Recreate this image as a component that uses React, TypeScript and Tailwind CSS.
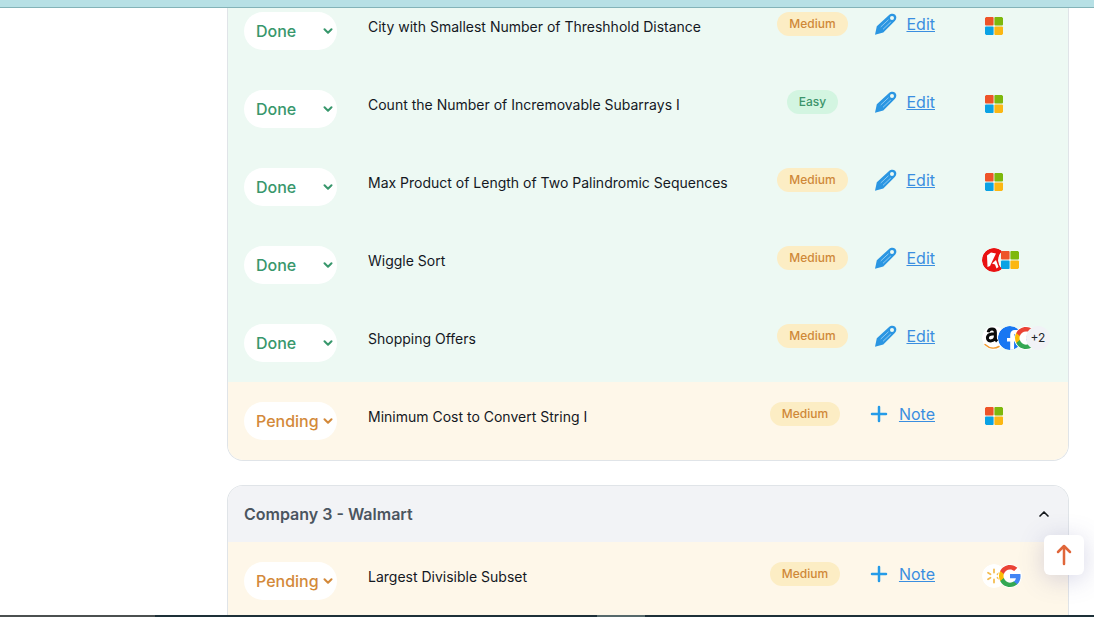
import type { ReactNode } from 'react';
import { ChevronDown, ChevronUp, Plus } from 'lucide-react';

type Status = 'Done' | 'Pending';
type Level = 'Easy' | 'Medium';
type Company = 'microsoft' | 'zomato' | 'amazon' | 'facebook' | 'google' | 'walmart';

interface Problem {
  title: string;
  status: Status;
  level: Level;
  companies: Company[];
  more?: number;
}

const companyTwo: Problem[] = [
  { title: 'City with Smallest Number of Threshhold Distance', status: 'Done', level: 'Medium', companies: ['microsoft'] },
  { title: 'Count the Number of Incremovable Subarrays I', status: 'Done', level: 'Easy', companies: ['microsoft'] },
  { title: 'Max Product of Length of Two Palindromic Sequences', status: 'Done', level: 'Medium', companies: ['microsoft'] },
  { title: 'Wiggle Sort', status: 'Done', level: 'Medium', companies: ['zomato', 'microsoft'] },
  { title: 'Shopping Offers', status: 'Done', level: 'Medium', companies: ['amazon', 'facebook', 'google'], more: 2 },
  { title: 'Minimum Cost to Convert String I', status: 'Pending', level: 'Medium', companies: ['microsoft'] },
];

const companyThree: Problem[] = [
  { title: 'Largest Divisible Subset', status: 'Pending', level: 'Medium', companies: ['walmart', 'google'] },
];

const logos: Record<Company, ReactNode> = {
  microsoft: (
    <>
      {/* currentColor is the row background, so it cuts into the logo beneath */}
      <circle cx="12" cy="12" r="12" fill="currentColor" />
      <rect x="3" y="3" width="8.6" height="8.6" rx="1" fill="#ee5428" />
      <rect x="12.4" y="3" width="8.6" height="8.6" rx="1" fill="#7db80c" />
      <rect x="3" y="12.4" width="8.6" height="8.6" rx="1" fill="#0ba2e4" />
      <rect x="12.4" y="12.4" width="8.6" height="8.6" rx="1" fill="#fbb713" />
    </>
  ),
  zomato: (
    <>
      <circle cx="12" cy="12" r="12" fill="#e91212" />
      <path d="M5 7.5 9 4.5l5 1L8 18l-2.500 1z" fill="#fff" />
      <path d="m10 15.500 4-3.500 2.500 7-2 1.500-1.500-4z" fill="#fff" />
    </>
  ),
  amazon: (
    <>
      <circle cx="12" cy="12" r="12" fill="#fff" />
      <path d="M6.200 6.200C7 1.800 13.400 1.900 13.400 6.400v5.800c0 1.500.7 2.200 1.700 3.200M13.400 7.700c-5-.1-8 1.100-8 4.300 0 4.500 8 3.700 8-2.300" fill="none" stroke="#0b0b0b" strokeWidth="3" />
      <path d="M3 18.500c4.500 4.200 10 4.400 14 2" fill="none" stroke="#f29a2e" strokeWidth="1.500" strokeLinecap="round" />
    </>
  ),
  facebook: (
    <>
      <circle cx="12" cy="12" r="12" fill="#1877f2" />
      <path d="M12.200 24v-8.500H9v-3.600h3.200V9c0-3.200 1.900-4.900 4.700-4.900 1.400 0 2.800.2 2.800.2v3.100h-1.600c-1.500 0-2 1-2 1.900v2.600h3.500l-.6 3.600h-2.900V24z" fill="#fff" />
    </>
  ),
  google: (
    <>
      <circle cx="12" cy="12" r="12" fill="#fff" />
      <path fill="#4285f4" d="M22.560 12.250c0-.78-.07-1.530-.2-2.250H12v4.260h5.920c-.26 1.370-1.040 2.530-2.210 3.310v2.770h3.570c2.080-1.920 3.280-4.740 3.280-8.090z" />
      <path fill="#34a853" d="M12 23c2.970 0 5.460-.98 7.280-2.660l-3.570-2.770c-.98.66-2.230 1.060-3.710 1.060-2.860 0-5.290-1.930-6.160-4.530H2.180v2.840C3.990 20.530 7.700 23 12 23z" />
      <path fill="#fbbc05" d="M5.840 14.090c-.22-.66-.35-1.360-.35-2.090s.13-1.430.35-2.090V7.070H2.180C1.430 8.550 1 10.220 1 12s.43 3.450 1.180 4.930l3.660-2.840z" />
      <path fill="#ea4335" d="M12 5.380c1.620 0 3.060.56 4.210 1.640l3.150-3.150C17.450 2.090 14.970 1 12 1 7.700 1 3.990 3.470 2.180 7.070l3.660 2.840c.87-2.600 3.300-4.530 6.160-4.530z" />
    </>
  ),
  walmart: (
    <>
      <circle cx="12" cy="12" r="12" fill="#fff" />
      <g stroke="#f4bd52" strokeWidth="1.800" strokeLinecap="round">
        <path d="M12 5.500v3M12 15.500v3M6 8.700l2.500 1.500M18 8.700l-2.500 1.500M6 15.300l2.500-1.500M18 15.300l-2.500-1.500" />
      </g>
    </>
  ),
};

function CompanyLogo({ company }: { company: Company }) {
  return (
    <svg viewBox="0 0 24 24" className="w-6 h-6 rounded-full shrink-0" role="img" aria-label={company}>
      {logos[company]}
    </svg>
  );
}

function PencilIcon() {
  return (
    <svg viewBox="0 0 24 24" className="w-6 h-6" aria-hidden="true">
      <path d="M1 22.700 2.800 14.200 14.800 3.200c2-1.800 4.700-2 6.400-.4s1.500 4.400-.4 6.300L9.300 20.600z" fill="#2b96e2" />
      <circle cx="18" cy="6" r="2" fill="#edf9f2" />
      <path d="m6.700 15 7.800-7.300M9 17.300l7.800-7.300" stroke="#8ccaf3" strokeWidth="1" />
    </svg>
  );
}

function StatusSelect({ problem }: { problem: Problem }) {
  const color = problem.status === 'Done' ? 'text-[#38976c]' : 'text-[#d3893a]';
  return (
    <div className={`relative w-[93px] ${color}`}>
      <select
        defaultValue={problem.status}
        aria-label={`Status of ${problem.title}`}
        className="appearance-none w-full h-[38px] pl-3 rounded-full bg-white text-base font-medium outline-none cursor-pointer"
      >
        <option>Done</option>
        <option>Pending</option>
      </select>
      <ChevronDown className="absolute right-0.5 top-3 w-3.5 h-3.5 pointer-events-none" strokeWidth={3.5} />
    </div>
  );
}

function ProblemRow({ problem }: { problem: Problem }) {
  const done = problem.status === 'Done';
  return (
    <tr className={`h-[78px] align-top ${done ? 'bg-[#edf9f3]' : 'bg-[#fef7e9]'}`}>
      <td className="w-[140px] pl-4 pt-5">
        <StatusSelect problem={problem} />
      </td>
      <td className="pt-5 text-sm leading-[30px] text-[#14181f]">{problem.title}</td>
      <td className="w-[200px] pt-5">
        <div className="flex justify-end pr-px">
          <div className="w-[100px] mr-3 flex justify-center">
            <span
              className={`h-6 px-3 rounded-full text-xs leading-6 font-medium ${
                problem.level === 'Easy' ? 'bg-[#d3f5e1] text-[#3c946b]' : 'bg-[#fcedc4] text-[#cf8838]'
              }`}
            >
              {problem.level}
            </span>
          </div>
          <a href="#" className="flex gap-2 text-base leading-6 text-[#3a8ee0]">
            {done ? <PencilIcon /> : <Plus className="w-6 h-6 text-[#259be8]" strokeWidth={2.5} />}
            <span className="underline">{done ? 'Edit' : 'Note'}</span>
          </a>
        </div>
      </td>
      <td className="w-[132px] pl-[46px] pt-5">
        <div className={`flex items-center h-7 -space-x-2 ${done ? 'text-[#edf9f3]' : 'text-[#fef7e9]'}`}>
          {problem.companies.map((company) => (
            <CompanyLogo key={company} company={company} />
          ))}
          {problem.more && (
            <span className="-ml-1 w-6 h-6 rounded-full bg-[#f1f2f6] text-xs leading-6 text-center text-[#22262c]">
              +{problem.more}
            </span>
          )}
        </div>
      </td>
    </tr>
  );
}

function ProblemTable({ problems }: { problems: Problem[] }) {
  return (
    <table className="w-full table-fixed border-collapse">
      <tbody>
        {problems.map((problem) => (
          <ProblemRow key={problem.title} problem={problem} />
        ))}
      </tbody>
    </table>
  );
}

export default function App() {
  return (
    <div className="h-screen flex flex-col overflow-hidden bg-white font-['Inter',sans-serif]">
      <header className="h-2 shrink-0 bg-[#b7e0e5] border-b border-[#83b3b8] relative z-10" />

      <main className="flex-1 min-h-0 overflow-hidden pl-[227px] pr-[25px]">
        <section className="-mt-4 border border-t-0 border-[#e0e4e8] rounded-b-2xl overflow-hidden">
          <ProblemTable problems={companyTwo} />
        </section>

        <section className="mt-6 border border-b-0 border-[#e0e4e8] rounded-t-2xl overflow-hidden">
          <button className="w-full h-14 px-4 flex items-center justify-between bg-[#f2f3f6] text-left">
            <span className="text-base font-semibold text-[#4b555f]">Company 3 - Walmart</span>
            <ChevronUp className="w-4 h-4 text-[#15181c]" strokeWidth={2.5} />
          </button>
          <ProblemTable problems={companyThree} />
        </section>
      </main>

      {/* Scroll to top */}
      <button
        aria-label="Scroll to top"
        className="fixed right-[10px] bottom-[42px] w-10 h-10 rounded-md bg-white shadow-[0_4px_24px_rgba(90,90,160,0.25)] flex items-center justify-center"
      >
        <svg viewBox="0 0 24 24" className="w-6 h-6" fill="none" aria-hidden="true">
          <path d="M12 21V3.500M6 9l6-6 6 6" stroke="#e0663a" strokeWidth="2.500" strokeLinecap="round" strokeLinejoin="round" />
        </svg>
      </button>

      <footer className="h-0.5 shrink-0 flex bg-[#1d3038]">
        <div className="w-[155px] bg-[#4b5050]" />
        <div className="w-12 ml-[442px] bg-[#56696b]" />
      </footer>
    </div>
  );
}
